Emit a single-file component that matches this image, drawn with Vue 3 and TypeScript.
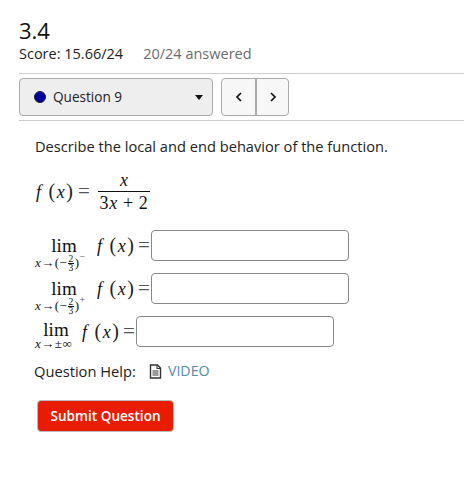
<script setup lang="ts">
interface LimitRow {
  sign: string;
  hasFraction: boolean;
}
const rows: LimitRow[] = [
  { sign: "−", hasFraction: true },
  { sign: "+", hasFraction: true },
  { sign: "", hasFraction: false },
];
</script>

<template>
  <div class="page">
    <h1 class="title">3.4</h1>
    <div class="score">
      <span>Score: 15.66/24</span>
      <span class="answered">20/24 answered</span>
    </div>
    <div class="toolbar">
      <div class="select">
        <span class="dot"></span>
        <span class="qname">Question 9</span>
        <span class="caret"></span>
      </div>
      <div class="nav">
        <button class="navbtn">
          <svg width="8" height="10" viewBox="0 0 8 10"><path d="M6 1 2 5l4 4" fill="none" stroke="#111" stroke-width="1.7" /></svg>
        </button>
        <button class="navbtn second">
          <svg width="8" height="10" viewBox="0 0 8 10"><path d="M2 1l4 4-4 4" fill="none" stroke="#111" stroke-width="1.7" /></svg>
        </button>
      </div>
    </div>
    <div class="body">
      <p class="prompt">Describe the local and end behavior of the function.</p>
      <div class="formula math">
        <span class="fx0"><i>f</i> <span class="paren">(</span><i>x</i><span class="paren">)</span></span>
        <span class="eq">=</span>
        <span class="frac">
          <span class="num"><i>x</i></span>
          <span class="den">3<i>x</i> + 2</span>
        </span>
      </div>
      <div class="limits">
        <div v-for="(row, i) in rows" :key="i" class="limit math" :class="{ short: !row.hasFraction }">
          <span class="lim">
            <span class="limword">lim</span>
            <span v-if="row.hasFraction" class="under">
              <i>x</i>→(−<span class="minifrac"><span>2</span><span class="minidown">3</span></span>)<sup class="sup">{{ row.sign }}</sup>
            </span>
            <span v-else class="under tight"><i>x</i>→±∞</span>
          </span>
          <span class="fx"><i>f</i> <span class="paren">(</span><i>x</i><span class="paren">)</span></span>
          <span class="eq2">=</span>
          <input class="answer" type="text" />
        </div>
      </div>
      <div class="help">
        <span>Question Help:</span>
        <svg class="doc" width="13" height="15" viewBox="0 0 13 15">
          <path d="M1.5 1h7l3 3v10h-10z" fill="none" stroke="#333" stroke-width="1.4" />
          <path d="M8 1v3.5h3.5M3.5 7h6M3.5 9h6M3.5 11h6" fill="none" stroke="#333" stroke-width="1.1" />
        </svg>
        <a class="video">VIDEO</a>
      </div>
      <button class="submit">Submit Question</button>
    </div>
  </div>
</template>

<style>
html, body { margin: 0; background: #fff; }
</style>

<style scoped>
.page {
  width: 464px;
  height: 478px;
  box-sizing: border-box;
  padding: 17px 0 0 19px;
  font-family: "Open Sans", sans-serif;
  color: #111;
  overflow: hidden;
}
.title {
  margin: 0 0 1px;
  font-size: 22px;
  font-weight: 400;
  line-height: 26px;
}
.score {
  display: flex;
  gap: 19px;
  font-size: 14.5px;
  line-height: 20px;
  color: #222;
}
.answered { color: #6c6c6c; margin-left: 1px; }
.toolbar {
  margin-top: 9px;
  padding: 4px 0;
  display: flex;
  gap: 8px;
  border-top: 1px solid #ccc;
  border-bottom: 1px solid #ccc;
}
.select {
  width: 194px;
  height: 38px;
  box-sizing: border-box;
  display: flex;
  align-items: center;
  padding: 0 9px 0 14px;
  border: 1px solid #aaa;
  border-radius: 4px;
  background: #eee;
  font-size: 13.6px;
}
.dot {
  width: 12px;
  height: 12px;
  border-radius: 50%;
  background: #00009c;
  border: 1px solid #223;
  box-sizing: border-box;
  margin-right: 7px;
}
.qname { flex: 1; color: #222; padding-bottom: 2px; }
.caret {
  width: 0;
  height: 0;
  border-left: 4px solid transparent;
  border-right: 4px solid transparent;
  border-top: 5px solid #111;
}
.nav {
  display: flex;
  height: 38px;
  box-sizing: border-box;
  border: 1px solid #aaa;
  border-radius: 4px;
  background: #f7f7f7;
}
.navbtn {
  width: 33px;
  padding: 0;
  border: 0;
  background: none;
  display: flex;
  align-items: center;
  justify-content: center;
}
.navbtn.second { border-left: 2px solid #aaa; }
.body { padding-left: 16px; }
.prompt {
  margin: 15px 0 0;
  font-size: 14.65px;
  line-height: 20px;
  color: #222;
}
.math {
  font-family: "Liberation Serif", serif;
  color: #111;
}
.formula {
  display: flex;
  align-items: center;
  margin-top: 13px;
  margin-left: 1px;
  font-size: 18px;
  height: 44px;
}
.fx0 { letter-spacing: 1.5px; white-space: nowrap; width: 42px; }
.paren { font-size: 20px; color: #222; }
.eq { color: #555; font-size: 21px; width: 20px; }
.frac {
  display: inline-flex;
  flex-direction: column;
  align-items: center;
  width: 52px;
}
.num {
  width: 100%;
  text-align: center;
  border-bottom: 1px solid #111;
  line-height: 22px;
}
.den { line-height: 22px; letter-spacing: 0.6px; white-space: nowrap; }
.limits {
  display: flex;
  flex-direction: column;
  gap: 12px;
  margin-top: 17px;
  margin-left: -1px;
}
.limit {
  display: flex;
  align-items: flex-start;
  font-size: 18px;
  height: 31px;
}
.lim {
  width: 62px;
  flex: none;
  display: flex;
  flex-direction: column;
  align-items: flex-start;
}
.limit.short .lim { width: 46px; }
.limword {
  width: 60px;
  text-align: center;
  line-height: 14px;
  margin-top: 9px;
  font-size: 19px;
}
.limit.short .limword { width: 44px; margin-top: 7px; }
.under {
  font-size: 13px;
  line-height: 18px;
  white-space: nowrap;
  display: flex;
  align-items: center;
  margin: 1px 0 0 1px;
  letter-spacing: 0.5px;
}
.under.tight { line-height: 11px; }
.minifrac {
  display: inline-flex;
  flex-direction: column;
  font-size: 9.5px;
  line-height: 8px;
  margin: 0 1px;
  text-align: center;
}
.minidown { border-top: 1px solid #111; }
.sup {
  font-size: 10px;
  line-height: 9px;
  color: #555;
  margin-top: -14px;
}
.fx { line-height: 30px; margin-left: 1px; white-space: nowrap; width: 41px; flex: none; letter-spacing: 1.5px; }
.limit.short .fx { margin-left: 2px; }
.eq2 { color: #555; font-size: 21px; line-height: 30px; width: 13px; flex: none; }
.answer {
  width: 198px;
  height: 31px;
  box-sizing: border-box;
  border: 1px solid #888;
  border-radius: 4px;
  background: #fff;
  padding: 0;
  flex: none;
}
.help {
  display: flex;
  align-items: center;
  margin-top: 14px;
  margin-left: -1px;
  font-size: 14.7px;
  line-height: 20px;
  color: #222;
}
.doc { margin-left: 13px; margin-right: 6px; }
.video { color: #4f8dae; font-size: 14.2px; }
.submit {
  display: block;
  margin: 19px 0 0 2px;
  width: 137px;
  height: 32px;
  padding: 0 0 2px;
  border: 1px solid #bbb;
  border-radius: 4px;
  background: #e81c00;
  color: #fff;
  font-family: "Open Sans", sans-serif;
  font-size: 13.6px;
  font-weight: 600;
}
</style>
